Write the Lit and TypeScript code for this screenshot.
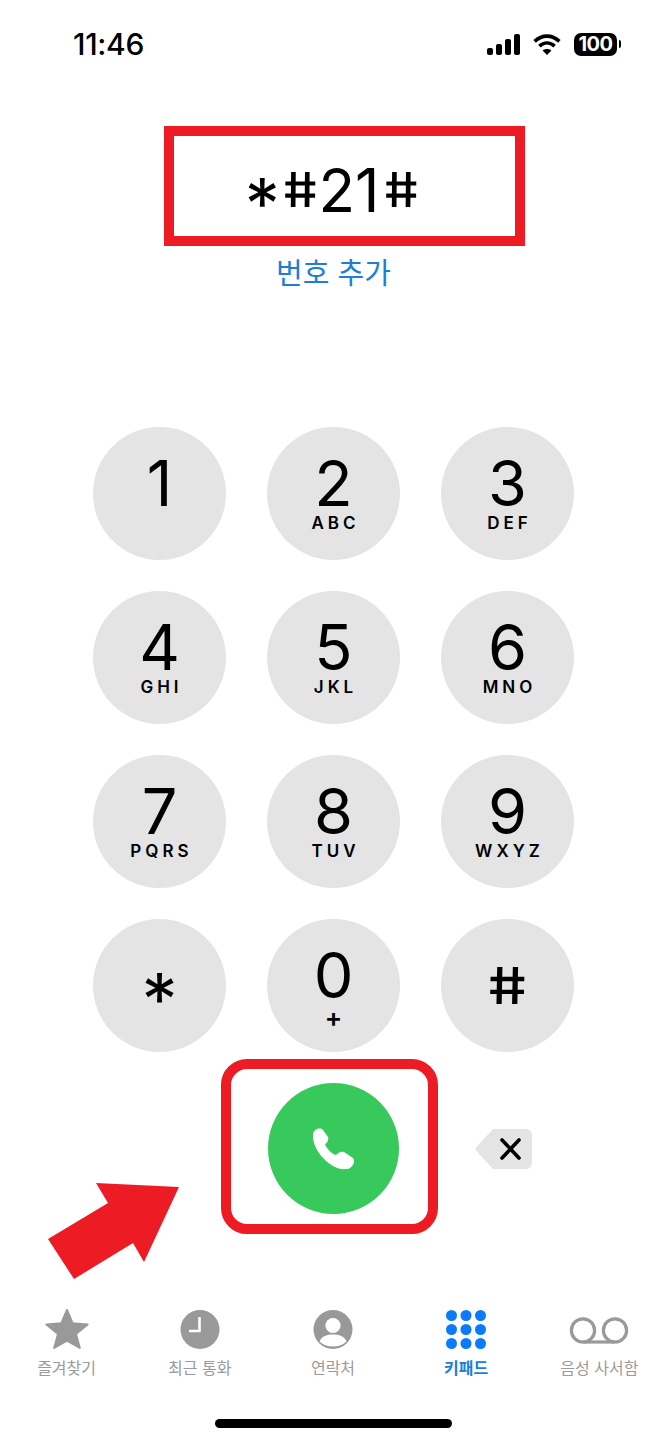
import { LitElement, html, css, svg } from 'lit';
import { customElement } from 'lit/decorators.js';

const KEYS = [
  { digit: '1', sub: '' },
  { digit: '2', sub: 'ABC' },
  { digit: '3', sub: 'DEF' },
  { digit: '4', sub: 'GHI' },
  { digit: '5', sub: 'JKL' },
  { digit: '6', sub: 'MNO' },
  { digit: '7', sub: 'PQRS' },
  { digit: '8', sub: 'TUV' },
  { digit: '9', sub: 'WXYZ' },
  { digit: '*', sub: '', sym: 'star' },
  { digit: '0', sub: '+' },
  { digit: '#', sub: '', sym: 'hash' },
];

const GRAY = '#999999';

const starIcon = svg`<svg width="44" height="42" viewBox="0 0 44 42">
  <path fill="${GRAY}" stroke="${GRAY}" stroke-width="2" stroke-linejoin="round"
    d="M22 2 L27.6 15.2 L42.6 16.4 L31 26 L34.8 40 L22 32.6 L9.2 40 L13 26 L1.4 16.4 L16.4 15.2 Z" />
</svg>`;

const clockIcon = svg`<svg width="40" height="42" viewBox="0 -2 40 42">
  <circle cx="20" cy="19.5" r="19.5" fill="${GRAY}" />
  <path d="M19.5 7 V21 H9" fill="none" stroke="#fff" stroke-width="2.6" />
</svg>`;

const contactIcon = svg`<svg width="40" height="42" viewBox="0 -2 40 42">
  <circle cx="20" cy="19.5" r="19.5" fill="${GRAY}" />
  <circle cx="20" cy="15.5" r="7.6" fill="#fff" />
  <path d="M6.5 31.5 C9 26 14 24.5 20 24.5 C26 24.5 31 26 33.5 31.5 C30 35 25.5 36.5 20 36.5 C14.5 36.5 10 35 6.5 31.5 Z" fill="#fff" />
</svg>`;

const keypadIcon = svg`<svg width="40" height="42" viewBox="0 -2 40 42" fill="#0a7aff">
  ${[5.5, 19.5, 33.5].flatMap((y) =>
    [5.5, 20, 34.5].map((x) => svg`<circle cx="${x}" cy="${y}" r="5.5" />`)
  )}
</svg>`;

const voicemailIcon = svg`<svg width="60" height="29" viewBox="0 -2 60 29" fill="none" stroke="${GRAY}" stroke-width="3.2">
  <circle cx="14" cy="13.4" r="11.6" />
  <circle cx="46" cy="13.4" r="11.6" />
  <path d="M14 25 H46" />
</svg>`;

const TABS = [
  { label: '즐겨찾기', icon: starIcon, active: false },
  { label: '최근 통화', icon: clockIcon, active: false },
  { label: '연락처', icon: contactIcon, active: false },
  { label: '키패드', icon: keypadIcon, active: true },
  { label: '음성 사서함', icon: voicemailIcon, active: false },
];

@customElement('app-root')
export class AppRoot extends LitElement {
  static styles = css`
    :host {
      display: block;
      width: 666px;
      height: 1440px;
      position: relative;
      background: #fff;
      overflow: hidden;
      font-family: Inter, 'Noto Sans CJK KR', sans-serif;
      color: #000;
    }

    .status {
      height: 88px;
      display: flex;
      align-items: center;
      justify-content: space-between;
      padding: 0 45px 0 73px;
    }

    .time {
      font-size: 30px;
      font-weight: 500;
      letter-spacing: -0.3px;
    }

    .status-icons {
      display: flex;
      align-items: center;
      gap: 13px;
    }

    .bars {
      display: flex;
      align-items: flex-end;
      gap: 3px;
      height: 21px;
    }

    .bars span {
      width: 6px;
      border-radius: 2px;
      background: #000;
    }

    .battery {
      display: flex;
      align-items: center;
      gap: 2px;
    }

    .battery-body {
      width: 43px;
      height: 23px;
      border-radius: 7px;
      background: #000;
      color: #fff;
      font-size: 20px;
      font-weight: 700;
      line-height: 23px;
      text-align: center;
      letter-spacing: -0.5px;
    }

    .battery-nub {
      width: 2px;
      height: 8px;
      border-radius: 0 2px 2px 0;
      background: #000;
    }

    .number {
      box-sizing: border-box;
      width: 361px;
      height: 120px;
      margin: 38px 0 0 164px;
      padding: 8px 25px 0 0;
      border: 10px solid #ed1c24;
      display: flex;
      align-items: center;
      justify-content: center;
      font-size: 60px;
      font-weight: 400;
      white-space: nowrap;
    }

    .star,
    .hash {
      display: inline-block;
      line-height: 1;
    }

    .hash {
      font-weight: 500;
    }

    .number .star {
      font-size: 70px;
      margin-right: 2px;
      transform: translateY(14px);
    }

    .number .hash {
      font-size: 48px;
      margin: 0 3px;
      transform: skewX(10deg) scaleX(1.13);
    }

    .number .hash:last-child {
      margin-left: 6px;
    }

    .add {
      margin: 10px 0 0 276px;
      font-size: 29px;
      line-height: 36px;
      color: #1c7ed6;
      white-space: nowrap;
    }

    .keypad {
      display: grid;
      grid-template-columns: repeat(3, 133px);
      grid-auto-rows: 133px;
      gap: 31px 41px;
      margin: 135px 0 0 93px;
    }

    .key {
      border-radius: 50%;
      background: #e4e4e4;
      display: flex;
      flex-direction: column;
      align-items: center;
      padding-top: 26px;
      box-sizing: border-box;
    }

    .key.sym {
      justify-content: center;
      padding-top: 0;
    }

    .key .star {
      font-size: 72px;
      transform: translateY(13px);
    }

    .key .hash {
      font-size: 51px;
      transform: skewX(10deg) scaleX(1.2);
    }

    .digit {
      font-size: 63px;
      line-height: 60px;
    }

    .sub {
      font-size: 17px;
      line-height: 16px;
      font-weight: 600;
      letter-spacing: 4px;
      margin-right: -4px;
      margin-top: 2px;
    }

    .sub.plus {
      font-size: 26px;
      line-height: 20px;
      letter-spacing: 0;
      margin-right: 0;
      margin-top: 3px;
    }

    .call-row {
      display: flex;
      margin: 7px 0 0 221px;
    }

    .call-box {
      box-sizing: border-box;
      width: 217px;
      height: 175px;
      border: 10px solid #ed1c24;
      border-radius: 26px;
      padding: 14px 0 0 37px;
    }

    .call {
      width: 131px;
      height: 131px;
      border-radius: 50%;
      background: #38c95c;
      display: flex;
      align-items: center;
      justify-content: center;
    }

    .delete {
      margin: 70px 0 0 37px;
    }

    .arrow {
      position: absolute;
      left: 48px;
      top: 1183px;
    }

    .tabs {
      display: grid;
      grid-template-columns: repeat(5, 1fr);
      margin-top: 74px;
    }

    .tab {
      display: flex;
      flex-direction: column;
      align-items: center;
      color: #9a9a9a;
      font-size: 16px;
      line-height: 24px;
      white-space: nowrap;
    }

    .tab.active {
      color: #1c7ed6;
      font-weight: 700;
    }

    .tab-icon {
      height: 42px;
      display: flex;
      align-items: center;
      justify-content: center;
      margin-bottom: 6px;
    }

    .home {
      width: 237px;
      height: 9px;
      border-radius: 5px;
      background: #000;
      margin: 39px 0 0 215px;
    }
  `;

  render() {
    return html`
      <div class="status">
        <div class="time">11:46</div>
        <div class="status-icons">
          <div class="bars">
            ${[7, 11, 16, 21].map((h) => html`<span style="height:${h}px"></span>`)}
          </div>
          <svg width="28" height="21" viewBox="0 0 28 21" fill="none" stroke="#000" stroke-width="3.6">
            <path d="M1.6 7.4 C9 0.4 19 0.4 26.4 7.4" />
            <path d="M6.4 12.2 C11 8 17 8 21.6 12.2" />
            <path d="M14 21 L9.6 16.4 C12 14.4 16 14.4 18.4 16.4 Z" fill="#000" stroke="none" />
          </svg>
          <div class="battery">
            <div class="battery-body">100</div>
            <div class="battery-nub"></div>
          </div>
        </div>
      </div>

      <div class="number">
        <span class="star">*</span><span class="hash">#</span><span>21</span><span class="hash">#</span>
      </div>
      <div class="add">번호 추가</div>

      <div class="keypad">
        ${KEYS.map(
          (k) => html`
            <div class="key ${k.sym ? 'sym' : ''}">
              <div class="digit ${k.sym ?? ''}">${k.digit}</div>
              ${k.sub ? html`<div class="sub ${k.sub === '+' ? 'plus' : ''}">${k.sub}</div>` : ''}
            </div>
          `
        )}
      </div>

      <div class="call-row">
        <div class="call-box">
          <div class="call">
            <svg width="44" height="42" viewBox="2 0 44 42">
              <path fill="#fff"
                d="M3 7 C3 1 10 -1 13 2 L18 9 C19 12 17 15 15 16 C16 20 22 26 26 27 C28 25 31 23 34 24 L43 30 C46 34 42 41 36 41 C22 43 2 23 3 7 Z" />
            </svg>
          </div>
        </div>
        <svg class="delete" width="57" height="40" viewBox="0 0 57 40">
          <path fill="#e4e4e4" d="M18 0 H51 A6 6 0 0 1 57 6 V34 A6 6 0 0 1 51 40 H18 L1 21.5 Q0 20 1 18.5 Z" />
          <path d="M27 11 L44 29 M44 11 L27 29" stroke="#000" stroke-width="3.6" fill="none" stroke-linecap="round" />
        </svg>
      </div>

      <svg class="arrow" width="132" height="97" viewBox="0 0 132 97">
        <path fill="#ed1c24" d="M48 0 L131 4 L96 79 L85 60 L26 96 L0 56 L60 20 Z" />
      </svg>

      <div class="tabs">
        ${TABS.map(
          (t) => html`
            <div class="tab ${t.active ? 'active' : ''}">
              <div class="tab-icon">${t.icon}</div>
              ${t.label}
            </div>
          `
        )}
      </div>

      <div class="home"></div>
    `;
  }
}
